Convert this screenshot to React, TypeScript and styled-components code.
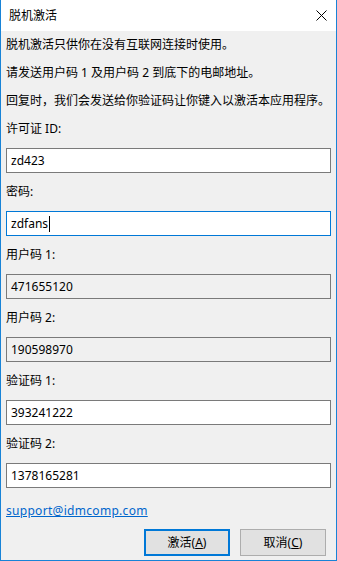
import React from "react";
import styled, { createGlobalStyle } from "styled-components";

const GlobalStyle = createGlobalStyle`
  html, body {
    margin: 0;
    padding: 0;
    background: #f0f0f0;
  }
  * {
    box-sizing: border-box;
  }
`;

const Window = styled.div`
  width: 337px;
  height: 561px;
  border: 1px solid #1883d7;
  border-top: none;
  background: #f0f0f0;
  display: flex;
  flex-direction: column;
  font-family: "Noto Sans", "Noto Sans CJK SC", sans-serif;
  font-size: 12px;
  color: #000;
  overflow: hidden;
`;

const TitleBar = styled.div`
  height: 31px;
  background: #fff;
  display: flex;
  align-items: center;
  justify-content: space-between;
  padding: 0 9px 0 8px;
  flex-shrink: 0;
`;

const Title = styled.div`
  font-size: 12px;
  line-height: 16px;
`;

const CloseButton = styled.div`
  width: 12px;
  height: 12px;
  display: flex;
  align-items: center;
  justify-content: center;
`;

const Body = styled.div`
  flex: 1;
  display: flex;
  flex-direction: column;
  padding: 6px 5px 0 5px;
`;

const Line = styled.div<{ $gap?: number }>`
  line-height: 16px;
  height: 16px;
  white-space: nowrap;
  margin-bottom: ${(p) => p.$gap ?? 12}px;
`;

const Field = styled.div<{ $readOnly?: boolean; $focused?: boolean }>`
  height: 25px;
  border: 1px solid ${(p) => (p.$focused ? "#0078d7" : "#7a7a7a")};
  background: ${(p) => (p.$readOnly ? "#f0f0f0" : "#fff")};
  display: flex;
  align-items: center;
  padding-left: 4px;
  margin-bottom: 11px;
  line-height: 16px;
`;

const Caret = styled.span`
  display: inline-block;
  width: 1px;
  height: 16px;
  background: #000;
  margin-left: 1px;
`;

const Link = styled.a`
  color: #0066cc;
  text-decoration: underline;
  line-height: 16px;
  letter-spacing: 0.3px;
  margin-top: 4px;
  align-self: flex-start;
`;

const ButtonRow = styled.div`
  display: flex;
  justify-content: flex-end;
  gap: 10px;
  margin-top: 10px;
  padding-right: 5px;
`;

const Button = styled.div<{ $primary?: boolean }>`
  width: 86px;
  height: 27px;
  background: #e1e1e1;
  border: ${(p) => (p.$primary ? "2px solid #0078d7" : "1px solid #adadad")};
  display: flex;
  align-items: center;
  justify-content: center;
  line-height: 16px;
`;

const Key = styled.span`
  text-decoration: underline;
`;

type FieldDef = {
  label: string;
  value: string;
  readOnly?: boolean;
  focused?: boolean;
};

const fields: FieldDef[] = [
  { label: "许可证 ID:", value: "zd423" },
  { label: "密码:", value: "zdfans", focused: true },
  { label: "用户码 1:", value: "471655120", readOnly: true },
  { label: "用户码 2:", value: "190598970", readOnly: true },
  { label: "验证码 1:", value: "393241222" },
  { label: "验证码 2:", value: "1378165281" },
];

export default function App() {
  return (
    <>
      <GlobalStyle />
      <Window>
        <TitleBar>
          <Title>脱机激活</Title>
          <CloseButton>
            <svg width="11" height="11" viewBox="0 0 11 11">
              <path d="M0.5 0.5 L10.5 10.5 M10.5 0.5 L0.5 10.5" stroke="#000" strokeWidth="1" />
            </svg>
          </CloseButton>
        </TitleBar>
        <Body>
          <Line>脱机激活只供你在没有互联网连接时使用。</Line>
          <Line>请发送用户码 1 及用户码 2 到底下的电邮地址。</Line>
          <Line>回复时，我们会发送给你验证码让你键入以激活本应用程序。</Line>
          {fields.map((f) => (
            <React.Fragment key={f.label}>
              <Line $gap={11}>{f.label}</Line>
              <Field $readOnly={f.readOnly} $focused={f.focused}>
                {f.value}
                {f.focused && <Caret />}
              </Field>
            </React.Fragment>
          ))}
          <Link href="#">support@idmcomp.com</Link>
          <ButtonRow>
            <Button $primary>
              激活(<Key>A</Key>)
            </Button>
            <Button>
              取消(<Key>C</Key>)
            </Button>
          </ButtonRow>
        </Body>
      </Window>
    </>
  );
}
